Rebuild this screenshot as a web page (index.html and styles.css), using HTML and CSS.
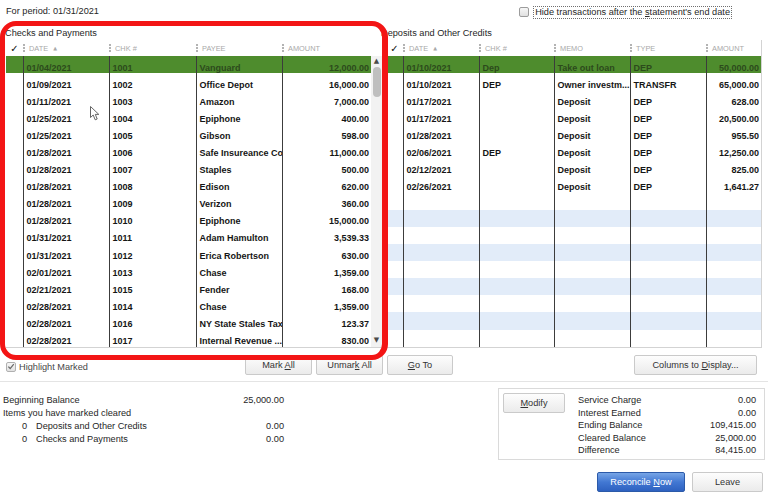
FILE: index.html
```html
<!DOCTYPE html>
<html>
<head>
    <meta charset="UTF-8">
    <title>Reconcile - Checking</title>
    <link rel="stylesheet" href="styles.css">
</head>
<body>
    <div class="topbar">
        <span class="period">For period: 01/31/2021</span>
        <label class="hide-opt">
            <span class="check-box"></span>
            <span class="focus">Hide transactions after the <u>s</u>tatement's end date</span>
        </label>
    </div>

    <div class="panes">
        <!-- Left: checks -->
        <section class="pane pane-checks">
            <div class="pane-title">Checks and Payments</div>
            <div class="grid-wrap">
                <table class="grid grid-checks">
                    <colgroup>
                        <col style="width:17px"><col style="width:86px"><col style="width:87px"><col style="width:86px"><col style="width:89px">
                    </colgroup>
                    <thead>
                        <tr>
                            <th class="mark">&#10003;</th>
                            <th><i class="sep"></i>DATE <span class="sort">&#9650;</span></th>
                            <th><i class="sep"></i>CHK #</th>
                            <th><i class="sep"></i>PAYEE</th>
                            <th><i class="sep"></i>AMOUNT</th>
                        </tr>
                    </thead>
                    <tbody>
                        <tr class="sel"><td></td><td>01/04/2021</td><td>1001</td><td>Vanguard</td><td class="num">12,000.00</td></tr>
                        <tr><td></td><td>01/09/2021</td><td>1002</td><td>Office Depot</td><td class="num">16,000.00</td></tr>
                        <tr><td></td><td>01/11/2021</td><td>1003</td><td>Amazon</td><td class="num">7,000.00</td></tr>
                        <tr><td></td><td>01/25/2021</td><td>1004</td><td>Epiphone</td><td class="num">400.00</td></tr>
                        <tr><td></td><td>01/25/2021</td><td>1005</td><td>Gibson</td><td class="num">598.00</td></tr>
                        <tr><td></td><td>01/28/2021</td><td>1006</td><td>Safe Insureance Co</td><td class="num">11,000.00</td></tr>
                        <tr><td></td><td>01/28/2021</td><td>1007</td><td>Staples</td><td class="num">500.00</td></tr>
                        <tr><td></td><td>01/28/2021</td><td>1008</td><td>Edison</td><td class="num">620.00</td></tr>
                        <tr><td></td><td>01/28/2021</td><td>1009</td><td>Verizon</td><td class="num">360.00</td></tr>
                        <tr><td></td><td>01/28/2021</td><td>1010</td><td>Epiphone</td><td class="num">15,000.00</td></tr>
                        <tr><td></td><td>01/31/2021</td><td>1011</td><td>Adam Hamulton</td><td class="num">3,539.33</td></tr>
                        <tr><td></td><td>01/31/2021</td><td>1012</td><td>Erica Robertson</td><td class="num">630.00</td></tr>
                        <tr><td></td><td>02/01/2021</td><td>1013</td><td>Chase</td><td class="num">1,359.00</td></tr>
                        <tr><td></td><td>02/21/2021</td><td>1015</td><td>Fender</td><td class="num">168.00</td></tr>
                        <tr><td></td><td>02/28/2021</td><td>1014</td><td>Chase</td><td class="num">1,359.00</td></tr>
                        <tr><td></td><td>02/28/2021</td><td>1016</td><td>NY State Stales Tax</td><td class="num">123.37</td></tr>
                        <tr><td></td><td>02/28/2021</td><td>1017</td><td>Internal Revenue ...</td><td class="num">830.00</td></tr>
                    </tbody>
                </table>
                <div class="scroll">
                    <div class="scroll-head"></div>
                    <div class="track">
                        <span class="arrow">&#9650;</span>
                        <span class="thumb"></span>
                        <span class="arrow down">&#9660;</span>
                    </div>
                </div>
            </div>
        </section>

        <!-- Right: deposits -->
        <section class="pane pane-deposits">
            <div class="pane-title">Deposits and Other Credits</div>
            <div class="grid-wrap">
                <table class="grid grid-deposits">
                    <colgroup>
                        <col style="width:17px"><col style="width:76px"><col style="width:75px"><col style="width:76px"><col style="width:76px"><col style="width:55px">
                    </colgroup>
                    <thead>
                        <tr>
                            <th class="mark">&#10003;</th>
                            <th><i class="sep"></i>DATE <span class="sort">&#9650;</span></th>
                            <th><i class="sep"></i>CHK #</th>
                            <th><i class="sep"></i>MEMO</th>
                            <th><i class="sep"></i>TYPE</th>
                            <th><i class="sep"></i>AMOUNT</th>
                        </tr>
                    </thead>
                    <tbody>
                        <tr class="sel"><td></td><td>01/10/2021</td><td>Dep</td><td>Take out loan</td><td>DEP</td><td class="num">50,000.00</td></tr>
                        <tr><td></td><td>01/10/2021</td><td>DEP</td><td>Owner investm...</td><td>TRANSFR</td><td class="num">65,000.00</td></tr>
                        <tr><td></td><td>01/17/2021</td><td></td><td>Deposit</td><td>DEP</td><td class="num">628.00</td></tr>
                        <tr><td></td><td>01/17/2021</td><td></td><td>Deposit</td><td>DEP</td><td class="num">20,500.00</td></tr>
                        <tr><td></td><td>01/28/2021</td><td></td><td>Deposit</td><td>DEP</td><td class="num">955.50</td></tr>
                        <tr><td></td><td>02/06/2021</td><td>DEP</td><td>Deposit</td><td>DEP</td><td class="num">12,250.00</td></tr>
                        <tr><td></td><td>02/12/2021</td><td></td><td>Deposit</td><td>DEP</td><td class="num">825.00</td></tr>
                        <tr><td></td><td>02/26/2021</td><td></td><td>Deposit</td><td>DEP</td><td class="num">1,641.27</td></tr>
                        <tr><td></td><td></td><td></td><td></td><td></td><td></td></tr>
                        <tr class="band"><td></td><td></td><td></td><td></td><td></td><td></td></tr>
                        <tr><td></td><td></td><td></td><td></td><td></td><td></td></tr>
                        <tr class="band"><td></td><td></td><td></td><td></td><td></td><td></td></tr>
                        <tr><td></td><td></td><td></td><td></td><td></td><td></td></tr>
                        <tr class="band"><td></td><td></td><td></td><td></td><td></td><td></td></tr>
                        <tr><td></td><td></td><td></td><td></td><td></td><td></td></tr>
                        <tr class="band"><td></td><td></td><td></td><td></td><td></td><td></td></tr>
                        <tr><td></td><td></td><td></td><td></td><td></td><td></td></tr>
                    </tbody>
                </table>
            </div>
        </section>
    </div>

    <div class="actions">
        <label class="highlight">
            <span class="check-box checked">
                <svg width="9" height="9" viewBox="0 0 9 9"><polyline points="1.5,4.6 3.6,6.8 7.6,1.8" fill="none" stroke="#6a6a6a" stroke-width="1.4"/></svg>
            </span>
            Highlight Marked
        </label>
        <div class="btn-row">
            <button class="btn btn-mark">Mark <u>A</u>ll</button>
            <button class="btn btn-mark">Unmar<u>k</u> All</button>
            <button class="btn btn-goto"><u>G</u>o To</button>
        </div>
        <button class="btn btn-columns">Columns to <u>D</u>isplay...</button>
    </div>

    <div class="rule"></div>

    <div class="summary">
        <div class="balances">
            <div class="bal-row"><span class="bal-label">Beginning Balance</span><span class="bal-val">25,000.00</span></div>
            <div class="bal-row"><span class="bal-label">Items you have marked cleared</span></div>
            <div class="bal-row sub"><span class="cnt">0</span><span class="bal-label">Deposits and Other Credits</span><span class="bal-val">0.00</span></div>
            <div class="bal-row sub"><span class="cnt">0</span><span class="bal-label">Checks and Payments</span><span class="bal-val">0.00</span></div>
        </div>
        <div class="summary-box">
            <button class="btn btn-modify"><u>M</u>odify</button>
            <div class="totals">
                <div class="bal-row"><span class="bal-label">Service Charge</span><span class="bal-val">0.00</span></div>
                <div class="bal-row"><span class="bal-label">Interest Earned</span><span class="bal-val">0.00</span></div>
                <div class="bal-row"><span class="bal-label">Ending Balance</span><span class="bal-val">109,415.00</span></div>
                <div class="bal-row"><span class="bal-label">Cleared Balance</span><span class="bal-val">25,000.00</span></div>
                <div class="bal-row"><span class="bal-label">Difference</span><span class="bal-val">84,415.00</span></div>
            </div>
        </div>
    </div>

    <div class="footer">
        <button class="btn btn-primary">Reconcile <u>N</u>ow</button>
        <button class="btn btn-leave">Leave</button>
    </div>

    <!-- annotation drawn over the screenshot -->
    <div class="annotation"></div>
    <svg class="cursor" width="11" height="15" viewBox="0 0 11 15">
        <path d="M0.5 0.5 L0.5 11.5 L3.2 9 L5.2 13.8 L7.2 13 L5.3 8.4 L8.8 8.4 Z" fill="#fff" stroke="#555" stroke-width="0.9"/>
    </svg>
</body>
</html>
```

FILE: styles.css
```css
* {
    box-sizing: border-box;
}

html, body {
    margin: 0;
    padding: 0;
}

body {
    width: 768px;
    height: 493px;
    overflow: hidden;
    position: relative;
    background: #fff;
    font-family: "Liberation Sans", Arial, sans-serif;
    font-size: 9.2px;
    color: #262626;
}

u {
    text-decoration: underline;
    text-underline-offset: 1px;
}

/* top line */
.topbar {
    display: flex;
    justify-content: space-between;
    align-items: center;
    height: 21px;
    padding: 1px 36px 0 6px;
}

.period {
    line-height: 11px;
}

.hide-opt {
    display: flex;
    align-items: center;
    gap: 4px;
    padding-top: 2px;
}

.check-box {
    display: inline-flex;
    align-items: center;
    justify-content: center;
    width: 10px;
    height: 10px;
    border: 1px solid #9c9c9c;
    border-radius: 2px;
    background: linear-gradient(#f6f6f6, #e1e1e1);
}

.focus {
    border: 1px dotted #6f6f6f;
    padding: 0 1px;
    line-height: 11px;
}

/* the two registers */
.panes {
    display: flex;
    height: 327px;
}

.pane-checks {
    margin-left: 5px;
    width: 378px;
}

.pane-deposits {
    margin-left: 3px;
    width: 376px;
}

.pane-title {
    margin-top: 5px;
    line-height: 14px;
    white-space: nowrap;
}

.pane-deposits .pane-title {
    margin-left: -5px;
}

.grid-wrap {
    display: flex;
    border-right: 1px solid #d3d3d3;
    border-bottom: 1px solid #d3d3d3;
}

.pane-checks .grid-wrap {
    margin-left: 1px;
}

.grid {
    border-collapse: collapse;
    table-layout: fixed;
}

.grid-checks {
    width: 365px;
}

.grid-deposits {
    width: 375px;
}

.grid th {
    height: 16px;
    padding: 0;
    font-size: 7.4px;
    font-weight: normal;
    color: #a9a9a9;
    text-align: left;
    white-space: nowrap;
    vertical-align: middle;
}

.grid th.mark {
    text-align: center;
    font-family: "DejaVu Sans", sans-serif;
    font-size: 10px;
    font-weight: bold;
    color: #111;
}

.sep {
    display: inline-block;
    width: 0;
    height: 8px;
    border-left: 2px dotted #b3b3b3;
    margin-right: 4px;
    vertical-align: -1px;
}

.sort {
    font-family: "DejaVu Sans", sans-serif;
    font-size: 5px;
    margin-left: 3px;
    vertical-align: 1px;
}

.grid tbody tr {
    height: 17.1px;
}

/* text sits low in each row, as in the register */
.grid td {
    padding: 7px 2px 0 3px;
    font-size: 9px;
    font-weight: bold;
    color: #151515;
    white-space: nowrap;
    overflow: hidden;
    line-height: 9px;
}

.grid td + td {
    border-left: 1px solid #3c3c3c;
}

.grid td.num {
    text-align: right;
    padding-right: 2px;
}

.grid tr.sel td {
    background: #4e8c2d;
    color: #2c4a1c;
}

.grid tr.band td {
    background: #e2ecf9;
}

/* scrollbar of the checks register */
.scroll {
    width: 11px;
    display: flex;
    flex-direction: column;
}

.scroll-head {
    height: 16px;
}

.track {
    flex: 1;
    display: flex;
    flex-direction: column;
    align-items: center;
    background: #f2f2f2;
}

.arrow {
    font-family: "DejaVu Sans", sans-serif;
    font-size: 7px;
    line-height: 10px;
    color: #4a4a4a;
}

.arrow.down {
    margin-top: auto;
    margin-bottom: 2px;
}

.thumb {
    width: 8px;
    height: 30px;
    margin-top: 1px;
    border-radius: 4px;
    background: #bfbfbf;
}

/* buttons under the registers */
.actions {
    display: flex;
    align-items: center;
    height: 20px;
    margin-top: 7px;
    padding-right: 11px;
}

.highlight {
    display: flex;
    align-items: center;
    gap: 3px;
    width: 245px;
    padding: 3px 0 0 6px;
    color: #474747;
}

.check-box.checked {
    border-color: #b0b0b0;
}

.btn-row {
    display: flex;
    gap: 4px;
}

.btn {
    display: block;
    height: 20px;
    padding: 0;
    border: 1px solid #cacaca;
    border-radius: 2px;
    background: linear-gradient(#fdfdfd, #ebebeb);
    font-family: inherit;
    font-size: 9.2px;
    line-height: 18px;
    text-align: center;
    white-space: nowrap;
    color: #333;
}

.btn-mark {
    width: 67px;
}

.btn-goto {
    width: 66px;
}

.btn-columns {
    width: 123px;
    margin-left: auto;
}

.rule {
    margin-top: 6px;
    border-top: 1px solid #e4e4e4;
}

/* balances */
.summary {
    display: flex;
    justify-content: space-between;
    padding: 0 3px;
}

.balances {
    width: 281px;
    padding-top: 12px;
    line-height: 13px;
}

.bal-row {
    display: flex;
    white-space: nowrap;
}

.bal-label {
    flex: 1;
}

.bal-val {
    text-align: right;
}

.bal-row.sub .cnt {
    width: 33px;
    padding-left: 19px;
}

.summary-box {
    display: flex;
    align-items: flex-start;
    width: 267px;
    height: 72px;
    margin-top: 6px;
    padding: 4px 8px 4px 4px;
    border: 1px solid #dadada;
}

.btn-modify {
    width: 62px;
    flex: none;
}

.totals {
    flex: 1;
    margin-left: 13px;
    padding-top: 1px;
    line-height: 12.6px;
}

.footer {
    display: flex;
    justify-content: flex-end;
    gap: 7px;
    margin-top: 12px;
    padding-right: 5px;
}

.btn-primary {
    width: 88px;
    border-color: #2c5aa9;
    background: linear-gradient(#77a5e6, #4278d3 50%, #2e61c0);
    color: #fff;
}

.btn-leave {
    width: 71px;
}

/* red highlight drawn on the screenshot */
.annotation {
    position: absolute;
    left: 0;
    top: 21px;
    width: 388px;
    height: 339px;
    border: 5px solid #f31515;
    border-right-width: 6px;
    border-radius: 16px;
    pointer-events: none;
}

.cursor {
    position: absolute;
    left: 90px;
    top: 106px;
}
```
